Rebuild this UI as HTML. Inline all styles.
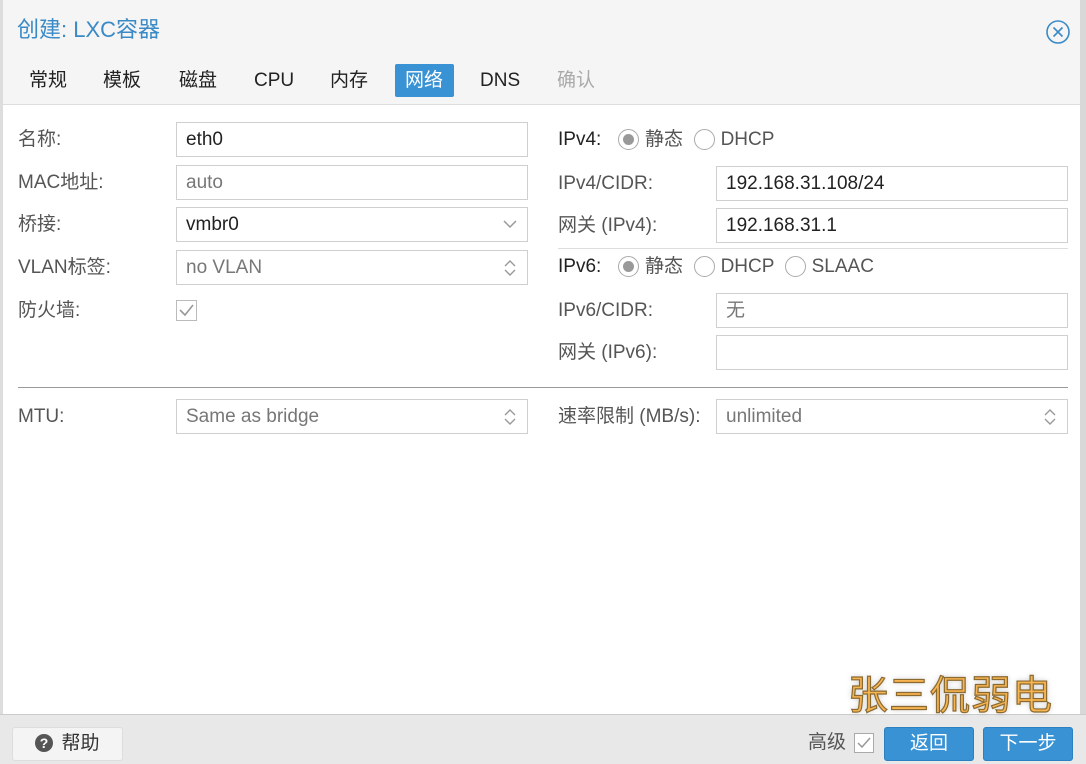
<!DOCTYPE html>
<html><head><meta charset="utf-8"><style>
*{margin:0;padding:0;box-sizing:border-box}
body{width:1086px;height:764px;overflow:hidden;background:#fff;font-family:"Liberation Sans","Noto Sans CJK SC",sans-serif;font-size:19px;color:#444;position:relative;line-height:24px}
.a{position:absolute;white-space:nowrap;line-height:24px}
.in{position:absolute;border:1px solid #cfcfcf;background:#fff;height:35px;padding-left:9px;line-height:33px;color:#222}
.in.g{color:#777}
.lab{position:absolute;line-height:24px;color:#555;white-space:nowrap}
.rad{display:inline-block;width:21px;height:21px;border:1px solid #aaa;border-radius:50%;vertical-align:-5px;margin-right:6px;position:relative;background:#fff}
.rad.on::after{content:"";position:absolute;left:4px;top:4px;width:11px;height:11px;border-radius:50%;background:#999}
.btn{position:absolute;top:727px;height:34px;line-height:32px;text-align:center;border-radius:3px}
.blue{background:#3892d4;color:#fff;border:1px solid #2a80c0}
.arr{position:absolute;right:10px;top:8px}
</style></head><body>
<div class="a" style="left:0;top:0;width:1086px;height:105px;background:#f5f5f5;border-bottom:1px solid #ddd"></div>
<div class="a" style="left:0;top:0;width:3px;height:764px;background:#ddd"></div>
<div class="a" style="right:0;top:0;width:6px;height:764px;background:#d8d8d8"></div>
<div class="a" style="left:17px;top:18px;font-size:22px;color:#3a8ac6">创建: LXC容器</div>
<svg class="a" style="left:1045px;top:19px" width="26" height="26" viewBox="0 0 26 26"><circle cx="13" cy="13" r="11" fill="none" stroke="#3a8ac6" stroke-width="1.6"/><path d="M8.5 8.5L17.5 17.5M17.5 8.5L8.5 17.5" stroke="#3a8ac6" stroke-width="1.6"/></svg>
<div class="a" style="left:395px;top:64px;width:59px;height:33px;background:#3892d4;border-radius:2px"></div>
<div class="a" style="left:29px;top:69px;color:#222">常规</div>
<div class="a" style="left:103px;top:69px;color:#222">模板</div>
<div class="a" style="left:179px;top:69px;color:#222">磁盘</div>
<div class="a" style="left:254px;top:69px;color:#222">CPU</div>
<div class="a" style="left:330px;top:69px;color:#222">内存</div>
<div class="a" style="left:405px;top:69px;color:#fff">网络</div>
<div class="a" style="left:480px;top:69px;color:#222">DNS</div>
<div class="a" style="left:557px;top:69px;color:#aaa">确认</div>

<div class="lab" style="left:18px;top:128px">名称:</div>
<div class="in" style="left:176px;top:122px;width:352px">eth0</div>
<div class="lab" style="left:18px;top:171px">MAC地址:</div>
<div class="in g" style="left:176px;top:165px;width:352px">auto</div>
<div class="lab" style="left:18px;top:213px">桥接:</div>
<div class="in" style="left:176px;top:207px;width:352px">vmbr0<svg class="arr" style="top:12px" width="14" height="9"><path d="M1 1L7 7L13 1" fill="none" stroke="#999" stroke-width="1.5"/></svg></div>
<div class="lab" style="left:18px;top:256px">VLAN标签:</div>
<div class="in g" style="left:176px;top:250px;width:352px">no VLAN<svg class="arr" width="14" height="18"><path d="M2 7L7 2L12 7M2 11L7 16L12 11" fill="none" stroke="#999" stroke-width="1.4"/></svg></div>
<div class="lab" style="left:18px;top:299px">防火墙:</div>
<svg class="a" style="left:176px;top:300px" width="21" height="21"><rect x="0.5" y="0.5" width="20" height="20" fill="#fff" stroke="#bbb"/><path d="M4 10L9 15L17 5" fill="none" stroke="#999" stroke-width="1.6"/></svg>

<div class="lab" style="left:558px;top:128px;color:#222">IPv4:</div>
<div class="a" style="left:618px;top:128px;color:#555"><span class="rad on"></span>静态 &nbsp;<span class="rad"></span>DHCP</div>
<div class="lab" style="left:558px;top:172px">IPv4/CIDR:</div>
<div class="in" style="left:716px;top:166px;width:352px">192.168.31.108/24</div>
<div class="lab" style="left:558px;top:214px">网关 (IPv4):</div>
<div class="in" style="left:716px;top:208px;width:352px">192.168.31.1</div>
<div class="a" style="left:558px;top:248px;width:510px;height:1px;background:#ddd"></div>
<div class="lab" style="left:558px;top:255px;color:#222">IPv6:</div>
<div class="a" style="left:618px;top:255px;color:#555"><span class="rad on"></span>静态 &nbsp;<span class="rad"></span>DHCP &nbsp;<span class="rad"></span>SLAAC</div>
<div class="lab" style="left:558px;top:299px">IPv6/CIDR:</div>
<div class="in g" style="left:716px;top:293px;width:352px">无</div>
<div class="lab" style="left:558px;top:341px">网关 (IPv6):</div>
<div class="in" style="left:716px;top:335px;width:352px"></div>

<div class="a" style="left:18px;top:387px;width:1050px;height:1px;background:#999"></div>
<div class="lab" style="left:18px;top:405px">MTU:</div>
<div class="in g" style="left:176px;top:399px;width:352px">Same as bridge<svg class="arr" width="14" height="18"><path d="M2 7L7 2L12 7M2 11L7 16L12 11" fill="none" stroke="#999" stroke-width="1.4"/></svg></div>
<div class="lab" style="left:558px;top:405px">速率限制 (MB/s):</div>
<div class="in g" style="left:716px;top:399px;width:352px">unlimited<svg class="arr" width="14" height="18"><path d="M2 7L7 2L12 7M2 11L7 16L12 11" fill="none" stroke="#999" stroke-width="1.4"/></svg></div>

<div class="a" style="left:0;top:714px;width:1086px;height:50px;background:#e8e8e8;border-top:1px solid #ccc"></div>
<div class="btn" style="left:12px;width:111px;background:#f4f4f4;border:1px solid #ddd;color:#333"><svg style="vertical-align:-3px;margin-right:8px" width="18" height="18"><circle cx="9" cy="9" r="9" fill="#555"/><text x="9" y="14" font-size="14" font-weight="bold" fill="#fff" text-anchor="middle" font-family="Liberation Sans">?</text></svg>帮助</div>
<div class="a" style="left:808px;top:731px;color:#555">高级</div>
<svg class="a" style="left:854px;top:733px" width="20" height="20"><rect x="0.5" y="0.5" width="19" height="19" fill="#fff" stroke="#aaa"/><path d="M4 10L8 14L16 5" fill="none" stroke="#999" stroke-width="1.5"/></svg>
<div class="btn blue" style="left:884px;width:90px">返回</div>
<div class="btn blue" style="left:983px;width:90px">下一步</div>
<div class="a" style="left:848px;top:672px;font-size:40px;line-height:48px;color:#f8b450;letter-spacing:1px;-webkit-text-stroke:1.2px #8a6a30;text-shadow:0 0 6px rgba(0,0,0,.25)">张三侃弱电</div>
</body></html>
